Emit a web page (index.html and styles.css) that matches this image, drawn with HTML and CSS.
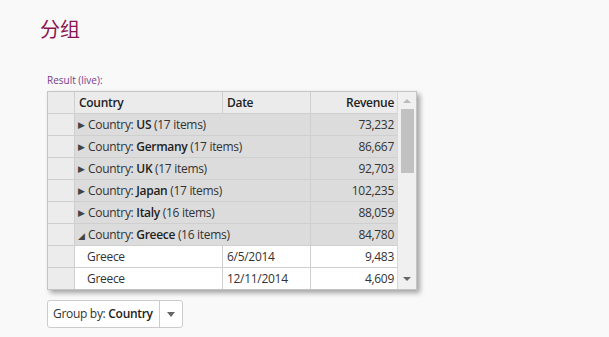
FILE: index.html
```html
<!DOCTYPE html>
<html>
<head>
<meta charset="utf-8">
<link rel="stylesheet" href="styles.css">
</head>
<body>
<div class="page">
  <h1 class="title">分组</h1>
  <div class="label">Result (live):</div>
  <div class="grid">
    <div class="cells">
      <div class="row hdr">
        <div class="c rh"></div>
        <div class="c country">Country</div>
        <div class="c date">Date</div>
        <div class="c rev">Revenue</div>
      </div>
      <div class="row grp"><div class="c rh"></div><div class="c gcell"><span class="tri">&#9654;</span>Country: <b>US</b> (17 items)</div><div class="c rev">73,232</div></div>
      <div class="row grp"><div class="c rh"></div><div class="c gcell"><span class="tri">&#9654;</span>Country: <b>Germany</b> (17 items)</div><div class="c rev">86,667</div></div>
      <div class="row grp"><div class="c rh"></div><div class="c gcell"><span class="tri">&#9654;</span>Country: <b>UK</b> (17 items)</div><div class="c rev">92,703</div></div>
      <div class="row grp"><div class="c rh"></div><div class="c gcell"><span class="tri">&#9654;</span>Country: <b>Japan</b> (17 items)</div><div class="c rev">102,235</div></div>
      <div class="row grp"><div class="c rh"></div><div class="c gcell"><span class="tri">&#9654;</span>Country: <b>Italy</b> (16 items)</div><div class="c rev">88,059</div></div>
      <div class="row grp"><div class="c rh"></div><div class="c gcell"><span class="tri open">&#9698;</span>Country: <b>Greece</b> (16 items)</div><div class="c rev">84,780</div></div>
      <div class="row data"><div class="c rh"></div><div class="c country ind">Greece</div><div class="c date">6/5/2014</div><div class="c rev">9,483</div></div>
      <div class="row data"><div class="c rh"></div><div class="c country ind">Greece</div><div class="c date">12/11/2014</div><div class="c rev">4,609</div></div>
    </div>
    <div class="sb">
      <div class="arrow up"></div>
      <div class="thumb"></div>
      <div class="track"></div>
      <div class="arrow down"></div>
    </div>
  </div>
  <div class="groupby">
    <div class="gb-text">Group by: <b>Country</b></div>
    <div class="gb-btn"><span class="caret"></span></div>
  </div>
</div>
</body>
</html>
```
FILE: styles.css
```css
html, body {
  margin: 0;
  padding: 0;
  background: #f9f9f9;
}
body {
  font-family: "Open Sans", "Noto Sans", sans-serif;
  color: #333;
}
.page {
  padding: 14px 0 0 40px;
}
.title {
  margin: 0;
  font-family: "Noto Sans CJK SC", sans-serif;
  font-weight: 400;
  font-size: 20px;
  line-height: 30px;
  color: #8a1651;
}
.label {
  margin: 29px 0 0 7px;
  font-size: 10px;
  line-height: 14px;
  color: #7b3a8a;
}
.grid {
  margin: 4px 0 0 7px;
  width: 368px;
  height: 197px;
  border: 1px solid #c4c4c4;
  display: flex;
  background: #f0f0f0;
  box-shadow: 3px 3px 5px rgba(0,0,0,0.35);
  overflow: hidden;
}
.cells {
  width: 349px;
  display: flex;
  flex-direction: column;
}
.row {
  display: flex;
  height: 22px;
  flex: none;
  font-size: 12px;
  letter-spacing: -0.3px;
}
.c {
  box-sizing: border-box;
  height: 22px;
  line-height: 21px;
  border-right: 1px solid #cfcfcf;
  border-bottom: 1px solid #cfcfcf;
  padding: 0 4px;
  white-space: nowrap;
  overflow: hidden;
}
b { font-weight: 600; color: #222; }
.rh {
  width: 27px;
  background: #ececec;
  flex: none;
}
.country { width: 148px; }
.date { width: 88px; }
.rev { width: 86px; text-align: right; border-right: none; padding-right: 3px; }
.gcell { width: 236px; padding-left: 3px; }
.hdr .c { background: #ebebeb; font-weight: 600; color: #222; }
.hdr .rh { background: #ebebeb; }
.grp .c { background: #dcdcdc; }
.grp .rh { background: #ececec; }
.data .c { background: #fff; }
.data .rh { background: #ececec; }
.ind { padding-left: 12px; }
.tri {
  display: inline-block;
  font-size: 9px;
  width: 10px;
  color: #444;
  vertical-align: 1px;
}
.tri.open { font-size: 9px; vertical-align: 0; }
.sb {
  width: 18px;
  border-left: 1px solid #d8d8d8;
  background: #f0f0f0;
  display: flex;
  flex-direction: column;
  align-items: center;
}
.arrow {
  width: 0; height: 0;
  border-left: 4px solid transparent;
  border-right: 4px solid transparent;
  margin: 7px 0 6px;
}
.arrow.up { border-bottom: 4px solid #bbb; }
.arrow.down { border-top: 4px solid #666; margin: 5px 0 8px; }
.thumb {
  width: 13px;
  height: 64px;
  background: #c1c1c1;
}
.track { flex: 1; }
.groupby {
  margin: 10px 0 0 7px;
  display: inline-flex;
  height: 26px;
  border: 1px solid #ccc;
  border-radius: 3px;
  background: #fff;
  font-size: 12px;
  letter-spacing: -0.3px;
}
.gb-text {
  padding: 0 6px 0 5px;
  line-height: 26px;
  border-right: 1px solid #ccc;
  color: #333;
}
.gb-btn {
  width: 22px;
  display: flex;
  align-items: center;
  justify-content: center;
}
.caret {
  width: 0; height: 0;
  border-left: 4px solid transparent;
  border-right: 4px solid transparent;
  border-top: 5px solid #666;
}
```
